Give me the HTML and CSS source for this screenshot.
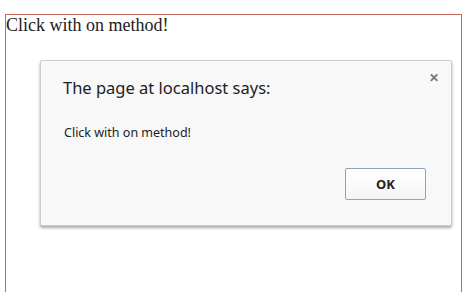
FILE: index.html
```html
<!DOCTYPE html>
<html lang="en">

<head>
    <meta charset="UTF-8">
    <meta name="viewport" content="width=device-width, initial-scale=1.0">
    <title>Alert</title>
    <link rel="stylesheet" href="styles.css">
</head>

<body>
    <div class="frame">
        <p class="msg">Click with on method!</p>
    </div>
    <div class="dialog">
        <span class="close">&#x2715;</span>
        <h2>The page at localhost says:</h2>
        <p class="text">Click with on method!</p>
        <div class="actions">
            <button>OK</button>
        </div>
    </div>
</body>

</html>
```
FILE: styles.css
```css
* {
    padding: 0;
    margin: 0;
    box-sizing: border-box;
}

body {
    background-color: #fff;
    position: relative;
    height: 302px;
    overflow: hidden;
}

.frame {
    margin: 14px 12px 0 5px;
    height: 278px;
    border: 1px solid #c96a5e;
    border-bottom: none;
}

.msg {
    font-family: "Liberation Serif", serif;
    font-size: 18px;
    line-height: 20px;
    color: #222;
}

.dialog {
    position: absolute;
    left: 40px;
    top: 60px;
    width: 412px;
    height: 166px;
    background-color: #f8f8f8;
    border: 1px solid #cdcdcd;
    border-radius: 2px;
    box-shadow: 0 2px 3px rgba(0, 0, 0, .35);
    padding: 15px 25px 0 22px;
    font-family: "Noto Sans", sans-serif;
    color: #222;
}

.dialog h2 {
    font-size: 16.5px;
    font-weight: 400;
    line-height: 24px;
}

.dialog .text {
    font-size: 12.5px;
    line-height: 16px;
    margin-top: 25px;
    padding-left: 1px;
}

.close {
    position: absolute;
    top: 8px;
    right: 12px;
    font-size: 12px;
    font-weight: 700;
    color: #777;
}

.actions {
    display: flex;
    justify-content: flex-end;
    margin-top: 27px;
}

button {
    width: 81px;
    height: 32px;
    border: 1px solid #8da3bd;
    border-radius: 2px;
    background: linear-gradient(#ffffff, #f3f5f8);
    font-family: "Noto Sans", sans-serif;
    font-size: 13px;
    font-weight: 700;
    color: #222;
}
```
